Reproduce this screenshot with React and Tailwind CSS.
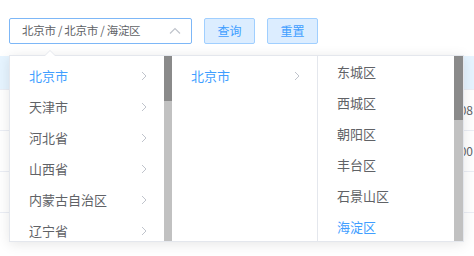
import React from 'react';

const provinces = ['北京市', '天津市', '河北省', '山西省', '内蒙古自治区', '辽宁省'];
const cities = ['北京市'];
const districts = ['东城区', '西城区', '朝阳区', '丰台区', '石景山区', '海淀区'];

function Chevron() {
  return (
    <svg width="6" height="10" viewBox="0 0 6 10">
      <path d="M1 1l4 4-4 4" fill="none" stroke="#c0c4cc" strokeWidth="1" />
    </svg>
  );
}

function Item({ label, active, arrow }) {
  return (
    <div className="h-[31px] flex items-center justify-between pl-[19px] pr-[17px]">
      <span className={`text-[13px] ${active ? 'text-[#409eff]' : 'text-[#606266]'}`}>{label}</span>
      {arrow && <Chevron />}
    </div>
  );
}

export default function App() {
  return (
    <div
      className="relative w-[474px] h-[256px] overflow-hidden bg-white"
      style={{ fontFamily: '"Noto Sans CJK SC", "Noto Sans", sans-serif' }}
    >
      {/* search bar */}
      <div className="flex items-center gap-[12px] pt-[18px] pl-[9px]">
        <div className="w-[183px] h-[26px] border border-[#7db7f7] rounded-[2px] flex items-center justify-between pl-[12px] pr-[10px]">
          <span className="text-[11.5px] text-[#606266] tracking-[-0.3px]">北京市 / 北京市 / 海淀区</span>
          <svg width="12" height="8" viewBox="0 0 12 8">
            <path d="M1 6.5l5-5 5 5" fill="none" stroke="#c0c4cc" strokeWidth="1.2" />
          </svg>
        </div>
        <button className="w-[51px] h-[26px] border border-[#a0cfff] bg-[#dcedff] text-[#409eff] text-[12px] rounded-[2px]">查询</button>
        <button className="w-[51px] h-[26px] border border-[#a0cfff] bg-[#dcedff] text-[#409eff] text-[12px] rounded-[2px]">重置</button>
      </div>

      {/* table behind */}
      <div className="mt-[12px] w-full">
        <div className="h-[34px] bg-[#e6f4ff] border-b border-[#ebeef5]" />
        <div className="h-[41px] border-b border-[#ebeef5] flex items-center justify-end">
          <span className="text-[12px] text-[#606266] mr-[1px]">2008</span>
        </div>
        <div className="h-[41px] border-b border-[#ebeef5] flex items-center justify-end">
          <span className="text-[12px] text-[#606266] mr-[1px]">2000</span>
        </div>
        <div className="h-[41px] border-b border-[#ebeef5]" />
      </div>

      {/* cascader dropdown */}
      <div className="absolute left-[9px] top-[55px] w-[455px] h-[187px] bg-white border border-[#e4e7ed] shadow-[0_2px_12px_rgba(0,0,0,0.1)] flex">
        <div className="absolute -top-[6px] left-[34px] w-0 h-0 border-x-[6px] border-x-transparent border-b-[6px] border-b-[#e4e7ed]" />
        <div className="absolute -top-[5px] left-[35px] w-0 h-0 border-x-[5px] border-x-transparent border-b-[5px] border-b-white" />

        <div className="w-[162px] h-full flex overflow-hidden">
          <div className="w-[154px] pt-[4px]">
            {provinces.map((p, i) => (
              <Item key={p} label={p} active={i === 0} arrow />
            ))}
          </div>
          <div className="w-[8px] h-full bg-[#c1c1c1] flex flex-col">
            <div className="h-[45px] bg-[#8a8a8a]" />
          </div>
        </div>

        <div className="w-[146px] h-full border-r border-[#e4e7ed] pt-[4px]">
          {cities.map((c) => (
            <Item key={c} label={c} active arrow />
          ))}
        </div>

        <div className="flex-1 h-full flex overflow-hidden">
          <div className="flex-1">
            {districts.map((d, i) => (
              <Item key={d} label={d} active={i === districts.length - 1} />
            ))}
          </div>
          <div className="w-[9px] h-full bg-[#c1c1c1] flex flex-col">
            <div className="h-[64px] bg-[#8a8a8a]" />
          </div>
        </div>
      </div>
    </div>
  );
}
